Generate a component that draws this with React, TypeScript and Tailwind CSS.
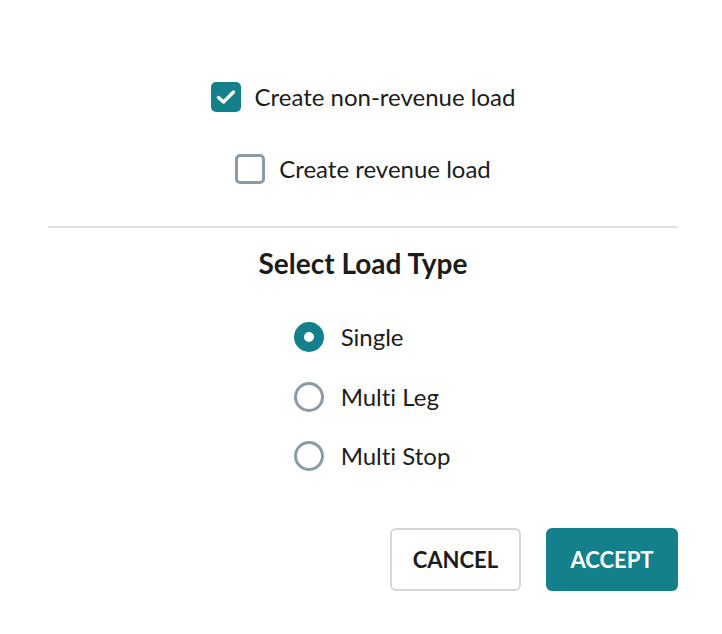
import React from "react";

export default function App() {
  return (
    <div
      className="w-[722px] h-[634px] bg-white text-[#1c1c1c] overflow-hidden [font-variant-ligatures:none]"
      style={{ fontFamily: "Lato, 'Noto Sans', sans-serif" }}
    >
      <div className="pl-[48px] pr-[44px] pt-[82px] flex flex-col">
        <div className="flex flex-col items-center gap-[42px]">
          <label className="flex items-center gap-[14px] h-[30px]">
            <span className="w-[30px] h-[30px] rounded-[5px] bg-[#13808b] flex items-center justify-center">
              <svg width="20" height="16" viewBox="0 0 20 16" fill="none">
                <path d="M2.5 8.5 L7.5 13 L17.5 3" stroke="white" strokeWidth="3.4" strokeLinecap="round" strokeLinejoin="round" />
              </svg>
            </span>
            <span className="text-[24px] leading-[30px]">Create non-revenue load</span>
          </label>
          <label className="flex items-center gap-[14px] h-[30px]">
            <span className="w-[30px] h-[30px] rounded-[5px] border-[3px] border-[#8b9ba5] bg-white" />
            <span className="text-[24px] leading-[30px]">Create revenue load</span>
          </label>
        </div>
        <div className="mt-[42px] h-[2px] bg-[#e2e2e2]" />
        <h2 className="mt-[18px] text-center text-[28px] leading-[34px] font-bold">Select Load Type</h2>
        <div className="mt-[42px] flex justify-center">
          <div className="flex flex-col gap-[29.5px] pl-[18px]">
            <div className="flex items-center gap-[17px] h-[30px]">
              <span className="w-[30px] h-[30px] rounded-full border-[10px] border-[#13808b] bg-white" />
              <span className="text-[24px] leading-[30px]">Single</span>
            </div>
            <div className="flex items-center gap-[17px] h-[30px]">
              <span className="w-[30px] h-[30px] rounded-full border-[3px] border-[#8b9ba5] bg-white" />
              <span className="text-[24px] leading-[30px]">Multi Leg</span>
            </div>
            <div className="flex items-center gap-[17px] h-[30px]">
              <span className="w-[30px] h-[30px] rounded-full border-[3px] border-[#8b9ba5] bg-white" />
              <span className="text-[24px] leading-[30px]">Multi Stop</span>
            </div>
          </div>
        </div>
        <div className="mt-[57px] flex justify-end gap-[25px]">
          <button className="w-[131px] h-[63px] rounded-[6px] border-2 border-[#d6d6d6] bg-white text-[22px] font-bold text-[#1c1c1c]">
            CANCEL
          </button>
          <button className="w-[132px] h-[63px] rounded-[6px] bg-[#13808b] text-[22px] font-bold text-white">
            ACCEPT
          </button>
        </div>
      </div>
    </div>
  );
}
